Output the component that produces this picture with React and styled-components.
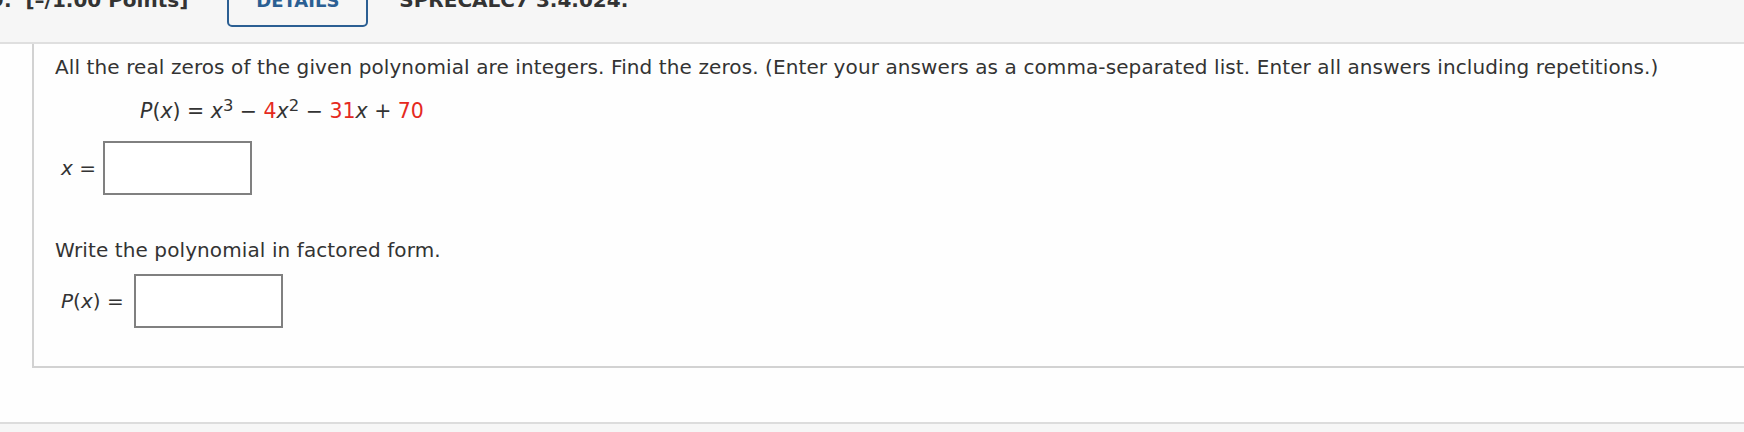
import styled, { createGlobalStyle } from "styled-components";

const GlobalStyle = createGlobalStyle`
  html, body {
    margin: 0;
    padding: 0;
    background: #fefefe;
  }
  body {
    font-family: "DejaVu Sans", Verdana, sans-serif;
    color: #333;
  }
`;

const Page = styled.div`
  width: 1744px;
  height: 432px;
  overflow: hidden;
  display: flex;
  flex-direction: column;
`;

const Header = styled.div`
  height: 42px;
  flex: none;
  background: #f6f6f6;
  border-bottom: 2px solid #dfdfdf;
  overflow: hidden;
`;

const HeaderRow = styled.div`
  display: flex;
  align-items: flex-start;
  margin: -20px 0 0 -10px;
  height: 47px;
`;

const HeaderText = styled.span`
  font-weight: bold;
  font-size: 20px;
  color: #333;
  margin-left: ${(p) => p.$ml || 0}px;
  line-height: 1;
  padding-top: 10px;
  white-space: pre;
`;

const DetailsButton = styled.button`
  margin-left: 39px;
  width: 141px;
  height: 100%;
  border: 2px solid #2b5f93;
  border-radius: 5px;
  background: transparent;
  color: #2b5f93;
  font-family: "DejaVu Sans", Verdana, sans-serif;
  font-weight: bold;
  font-size: 18px;
  padding-top: 10px;
  display: flex;
  justify-content: center;
  align-items: flex-start;
  line-height: 1;
`;

const Body = styled.div`
  flex: 1;
  padding-left: 32px;
  border-bottom: 2px solid #dcdcdc;
`;

const Panel = styled.div`
  border-left: 2px solid #d2d2d2;
  border-bottom: 2px solid #d2d2d2;
  padding: 9px 0 30px 21px;
  height: 324px;
  box-sizing: border-box;
`;

const Prompt = styled.p`
  margin: ${(p) => p.$mt || 0}px 0 0;
  font-size: 20px;
  letter-spacing: 0.1px;
  line-height: 28px;
  white-space: nowrap;
`;

const Formula = styled.div`
  margin: 16px 0 0 85px;
  font-size: 20.5px;
  line-height: 28px;
  white-space: nowrap;
`;

const Var = styled.i`
  font-style: oblique;
`;

const Red = styled.span`
  color: #e52a1e;
`;

const Sup = styled.sup`
  font-size: 0.8em;
  line-height: 0;
  vertical-align: 0.45em;
`;

const AnswerRow = styled.div`
  display: flex;
  align-items: center;
  margin-top: ${(p) => p.$mt || 0}px;
  margin-left: ${(p) => p.$ml || 0}px;
  gap: ${(p) => p.$gap || 10}px;
  font-size: 20px;
`;

const Label = styled.span`
  white-space: nowrap;
`;

const AnswerBox = styled.input`
  width: 149px;
  height: 54px;
  box-sizing: border-box;
  border: 2px solid #808080;
  background: #fff;
  margin: 0;
  padding: 0 6px;
  font-size: 18px;
  outline: none;
`;

const Tail = styled.div`
  height: 8px;
  background: #f6f6f6;
  flex: none;
`;

export default function App() {
  return (
    <>
      <GlobalStyle />
      <Page>
        <Header>
          <HeaderRow>
            <HeaderText>9.  [–/1.00 Points]</HeaderText>
            <DetailsButton>DETAILS</DetailsButton>
            <HeaderText $ml={31}>SPRECALC7 3.4.024.</HeaderText>
          </HeaderRow>
        </Header>
        <Body>
          <Panel>
            <Prompt>
              All the real zeros of the given polynomial are integers. Find the zeros. (Enter your
              answers as a comma-separated list. Enter all answers including repetitions.)
            </Prompt>
            <Formula>
              <Var>P</Var>(<Var>x</Var>) = <Var>x</Var>
              <Sup>3</Sup> − <Red>4</Red>
              <Var>x</Var>
              <Sup>2</Sup> − <Red>31</Red>
              <Var>x</Var> + <Red>70</Red>
            </Formula>
            <AnswerRow $mt={16} $ml={6} $gap={7}>
              <Label>
                <Var>x</Var> =
              </Label>
              <AnswerBox type="text" />
            </AnswerRow>
            <Prompt $mt={41}>Write the polynomial in factored form.</Prompt>
            <AnswerRow $mt={10} $ml={6}>
              <Label>
                <Var>P</Var>(<Var>x</Var>) =
              </Label>
              <AnswerBox type="text" />
            </AnswerRow>
          </Panel>
        </Body>
        <Tail />
      </Page>
    </>
  );
}
